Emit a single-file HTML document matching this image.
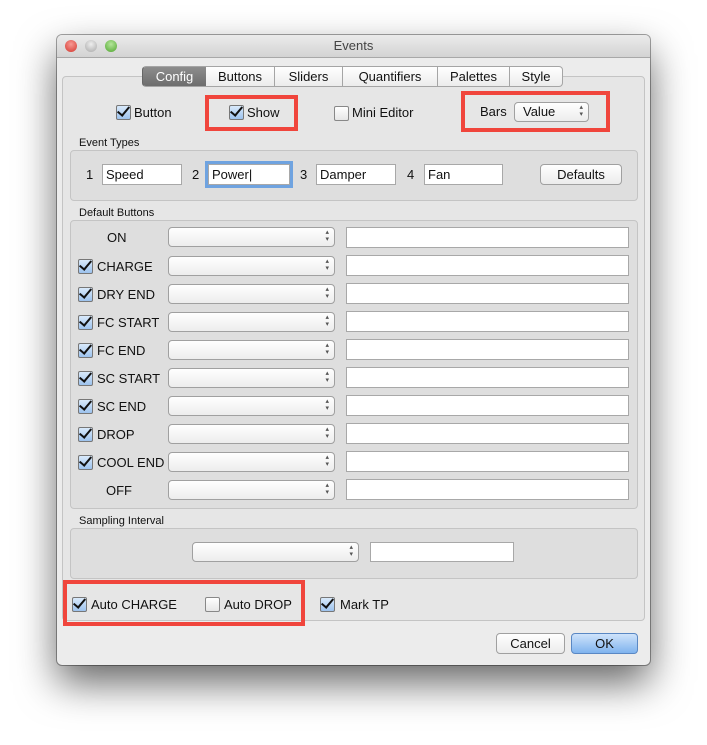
<!DOCTYPE html><html><head><style>
body{margin:0;width:707px;height:745px;background:#fff;position:relative;overflow:hidden;font-family:"Liberation Sans",sans-serif;font-size:13px;color:#111}
.a{position:absolute}
.win{left:57px;top:35px;width:593px;height:630px;background:#ececec;border-radius:5px;box-shadow:0 18px 40px rgba(0,0,0,.6),0 0 0 1px rgba(0,0,0,.35)}
.tb{left:57px;top:35px;width:593px;height:22px;background:linear-gradient(#ebebeb,#d3d3d3);border-radius:5px 5px 0 0;border-bottom:1px solid #a8a8a8;text-align:center;line-height:22px;color:#444}
.dot{width:12px;height:12px;border-radius:50%;top:40px}
.box{border:1px solid #c4c4c4;background:#dedede;border-radius:4px}
.tab{top:66px;height:19px;line-height:19px;text-align:center;background:linear-gradient(#fff,#ececec);border:1px solid #a5a5a5;border-left:none;font-size:13px}
.cb{width:13px;height:13px;border:1px solid #777;border-radius:2px;background:linear-gradient(#d9e9fb,#9dc2ee)}
.cb:after{content:"";position:absolute;left:3px;top:-2px;width:5px;height:10px;border:solid #111;border-width:0 2.5px 2.5px 0;transform:rotate(40deg)}
.cu{width:13px;height:13px;border:1px solid #888;border-radius:2px;background:linear-gradient(#fff,#e6e6e6)}
.tf{background:#fff;border:1px solid #a8a8a8;box-sizing:border-box;height:21px;line-height:19px;padding-left:3px}
.pp{background:linear-gradient(#fff,#ededed);border:1px solid #a0a0a0;border-radius:4px;box-sizing:border-box;height:20px}
.pp:after{content:"▴\A▾";white-space:pre;position:absolute;right:5px;top:1px;font-size:7px;line-height:7px;color:#555}
.btn{background:linear-gradient(#fff,#ececec);border:1px solid #a0a0a0;border-radius:4px;box-sizing:border-box;text-align:center;height:21px;line-height:19px}
.red{border:4px solid #f0453c;box-sizing:border-box}
.lbl{font-size:11px}
</style></head><body>
<div class="a win"></div>
<div class="a tb">Events</div>
<div class="a dot" style="left:65px;background:radial-gradient(circle at 50% 35%,#f89a94,#d3372e)"></div>
<div class="a dot" style="left:85px;background:radial-gradient(circle at 50% 35%,#eee,#a8a8a8)"></div>
<div class="a dot" style="left:105px;background:radial-gradient(circle at 50% 35%,#b5e69b,#4fa52e)"></div>
<div class="a box" style="left:62px;top:76px;width:581px;height:543px;background:#e6e6e6"></div>
<div class="a tab" style="left:142px;width:63px;background:linear-gradient(#8d8d8d,#6d6d6d);color:#fff;border-left:1px solid #666;border-radius:4px 0 0 4px">Config</div>
<div class="a tab" style="left:206px;width:68px">Buttons</div>
<div class="a tab" style="left:275px;width:67px">Sliders</div>
<div class="a tab" style="left:343px;width:94px">Quantifiers</div>
<div class="a tab" style="left:438px;width:71px">Palettes</div>
<div class="a tab" style="left:510px;width:52px;border-radius:0 4px 4px 0">Style</div>

<div class="a cb" style="left:116px;top:105px"></div><div class="a" style="left:134px;top:105px">Button</div>
<div class="a cb" style="left:229px;top:105px"></div><div class="a" style="left:247px;top:105px">Show</div>
<div class="a red" style="left:205px;top:95px;width:93px;height:36px"></div>
<div class="a cu" style="left:334px;top:106px"></div><div class="a" style="left:352px;top:105px">Mini Editor</div>
<div class="a" style="left:480px;top:104px">Bars</div>
<div class="a pp" style="left:514px;top:102px;width:75px;padding-left:8px;line-height:18px">Value</div>
<div class="a red" style="left:461px;top:91px;width:149px;height:41px"></div>

<div class="a lbl" style="left:79px;top:137px">Event Types</div>
<div class="a box" style="left:70px;top:150px;width:566px;height:49px"></div>
<div class="a" style="left:86px;top:167px">1</div><div class="a tf" style="left:102px;top:164px;width:80px">Speed</div>
<div class="a" style="left:192px;top:167px">2</div><div class="a tf" style="left:208px;top:164px;width:82px;box-shadow:0 0 0 3px #6fa3e0">Power|</div>
<div class="a" style="left:300px;top:167px">3</div><div class="a tf" style="left:316px;top:164px;width:80px">Damper</div>
<div class="a" style="left:407px;top:167px">4</div><div class="a tf" style="left:424px;top:164px;width:79px">Fan</div>
<div class="a btn" style="left:540px;top:164px;width:82px">Defaults</div>

<div class="a lbl" style="left:79px;top:207px">Default Buttons</div>
<div class="a box" style="left:70px;top:220px;width:566px;height:287px"></div>

<div class="a" style="left:107px;top:230px">ON</div>
<div class="a pp" style="left:168px;top:227px;width:167px"></div><div class="a tf" style="left:346px;top:227px;width:283px"></div>
<div class="a cb" style="left:78px;top:259px"></div><div class="a" style="left:97px;top:259px">CHARGE</div>
<div class="a pp" style="left:168px;top:256px;width:167px"></div><div class="a tf" style="left:346px;top:255px;width:283px"></div>
<div class="a cb" style="left:78px;top:287px"></div><div class="a" style="left:97px;top:287px">DRY END</div>
<div class="a pp" style="left:168px;top:284px;width:167px"></div><div class="a tf" style="left:346px;top:283px;width:283px"></div>
<div class="a cb" style="left:78px;top:315px"></div><div class="a" style="left:97px;top:315px">FC START</div>
<div class="a pp" style="left:168px;top:312px;width:167px"></div><div class="a tf" style="left:346px;top:311px;width:283px"></div>
<div class="a cb" style="left:78px;top:343px"></div><div class="a" style="left:97px;top:343px">FC END</div>
<div class="a pp" style="left:168px;top:340px;width:167px"></div><div class="a tf" style="left:346px;top:339px;width:283px"></div>
<div class="a cb" style="left:78px;top:371px"></div><div class="a" style="left:97px;top:371px">SC START</div>
<div class="a pp" style="left:168px;top:368px;width:167px"></div><div class="a tf" style="left:346px;top:367px;width:283px"></div>
<div class="a cb" style="left:78px;top:399px"></div><div class="a" style="left:97px;top:399px">SC END</div>
<div class="a pp" style="left:168px;top:396px;width:167px"></div><div class="a tf" style="left:346px;top:395px;width:283px"></div>
<div class="a cb" style="left:78px;top:427px"></div><div class="a" style="left:97px;top:427px">DROP</div>
<div class="a pp" style="left:168px;top:424px;width:167px"></div><div class="a tf" style="left:346px;top:423px;width:283px"></div>
<div class="a cb" style="left:78px;top:455px"></div><div class="a" style="left:97px;top:455px">COOL END</div>
<div class="a pp" style="left:168px;top:452px;width:167px"></div><div class="a tf" style="left:346px;top:451px;width:283px"></div>
<div class="a" style="left:106px;top:483px">OFF</div>
<div class="a pp" style="left:168px;top:480px;width:167px"></div><div class="a tf" style="left:346px;top:479px;width:283px"></div>

<div class="a lbl" style="left:79px;top:515px">Sampling Interval</div>
<div class="a box" style="left:70px;top:528px;width:566px;height:49px"></div>
<div class="a pp" style="left:192px;top:542px;width:167px"></div><div class="a tf" style="left:370px;top:542px;width:144px;height:20px"></div>

<div class="a cb" style="left:72px;top:597px"></div><div class="a" style="left:91px;top:597px">Auto CHARGE</div>
<div class="a cu" style="left:205px;top:597px"></div><div class="a" style="left:224px;top:597px">Auto DROP</div>
<div class="a red" style="left:63px;top:580px;width:242px;height:46px"></div>
<div class="a cb" style="left:320px;top:597px"></div><div class="a" style="left:340px;top:597px">Mark TP</div>

<div class="a btn" style="left:496px;top:633px;width:69px">Cancel</div>
<div class="a btn" style="left:571px;top:633px;width:67px;background:linear-gradient(#cfe3fb,#7fb3ee);border-color:#5a88c4">OK</div>
</body></html>
